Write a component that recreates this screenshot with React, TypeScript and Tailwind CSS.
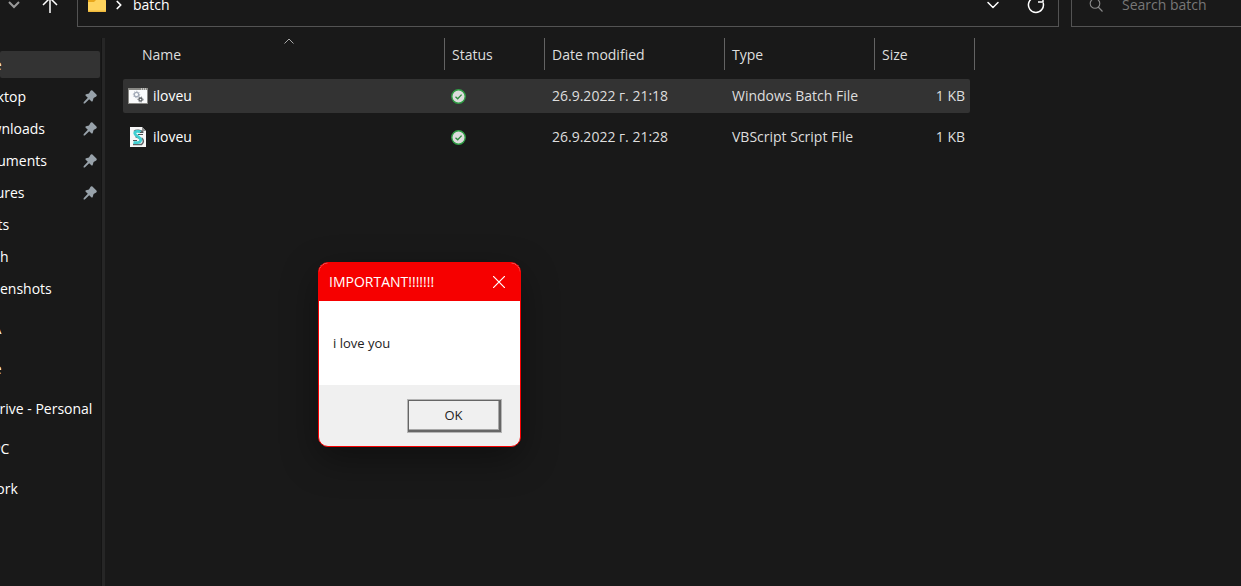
import { ChevronDown, ChevronRight } from 'lucide-react';

type SidebarItem = { label: string; pinned?: boolean };

const quickAccess: SidebarItem[] = [
  { label: 'Desktop', pinned: true },
  { label: 'Downloads', pinned: true },
  { label: 'Documents', pinned: true },
  { label: 'Pictures', pinned: true },
  { label: 'Hosts' },
  { label: 'batch' },
  { label: 'Screenshots' },
];

const locations = ['MEGA', 'Home', 'OneDrive - Personal', 'This PC', 'Network'];

const files = [
  { name: 'iloveu', kind: 'bat', date: '26.9.2022 г. 21:18', type: 'Windows Batch File', size: '1 KB', selected: true },
  { name: 'iloveu', kind: 'vbs', date: '26.9.2022 г. 21:28', type: 'VBScript Script File', size: '1 KB', selected: false },
];

function FolderIcon() {
  return (
    <svg viewBox="0 0 18 14" className="w-[18px] h-3.5 shrink-0" aria-hidden="true">
      <path d="M0 1a1 1 0 0 1 1-1h5l2 2h9a1 1 0 0 1 1 1v4H0z" fill="#e8a71c" />
      <path d="M0 4h6l2-2h9a1 1 0 0 1 1 1v10a1 1 0 0 1-1 1H1a1 1 0 0 1-1-1z" fill="#ffd45e" />
      <path d="M0 12.500h18v.5a1 1 0 0 1-1 1H1a1 1 0 0 1-1-1z" fill="#f0b93c" />
    </svg>
  );
}

function PinIcon() {
  return (
    <svg viewBox="0 0 14 14" className="w-3.5 h-3.5 shrink-0" aria-hidden="true">
      <path
        d="M7.600.8c.4-.7 1.200-.8 1.800-.2l4 4c.6.6.5 1.400-.2 1.800L10.600 8l-.9 2.900c-.2.7-.9.9-1.400.4L6.200 9.200 1.800 13.400H.6v-1.200L4.800 7.800 2.700 5.700c-.5-.5-.3-1.200.4-1.400L6 3.400z"
        fill="#98a2aa"
      />
    </svg>
  );
}

function Gear({ cx, cy, r, color }: { cx: number; cy: number; r: number; color: string }) {
  return (
    <g stroke={color} fill="none">
      <circle cx={cx} cy={cy} r={r} strokeWidth="1.300" />
      <circle cx={cx} cy={cy} r={r + 1} strokeWidth="1" strokeDasharray="1.200 1.200" />
    </g>
  );
}

function BatchFileIcon() {
  return (
    <svg viewBox="0 0 20 16" className="w-5 h-4" aria-hidden="true">
      <path d="M0 0h20v16H0z" fill="#8a8a86" />
      <path d="M1 2h18v13H1z" fill="#fafbfc" />
      <path d="M13 1h1M15 1h1M17 1h1" stroke="#fff" />
      <Gear cx={8.5} cy={6.5} r={2.2} color="#a3abb8" />
      <Gear cx={12.5} cy={11.5} r={1.5} color="#5d6266" />
    </svg>
  );
}

function ScriptFileIcon() {
  return (
    <svg viewBox="0 0 16 20" className="w-4 h-5" aria-hidden="true">
      <path d="M0 0h12l4 4v16H0z" fill="#f7f7f7" />
      <path d="M12 0v4h4z" fill="#8d8d8d" />
      <path d="M4 4.500C6 2.500 11 3 13.500 5.500M5.500 9.500l5 2M3 17.500h8.500c2.500-1.500 2.500-5 0-6.500" fill="none" stroke="#5a6264" strokeWidth="1.500" />
      <path d="M10.500 5C8.500 3.800 4.500 4.200 4.800 6.500c.3 2.500 6.200 3.500 6 6.500-.2 2.800-4 3-7.300 2.500" fill="none" stroke="#3fcfd2" strokeWidth="2.800" />
      <path d="M8 7.500h5M10 5.500h3M3 13.500h4" stroke="#4a5254" strokeWidth="1" />
    </svg>
  );
}

function SyncedIcon() {
  return (
    <svg viewBox="0 0 15 15" className="w-[15px] h-[15px]" role="img" aria-label="Synced">
      <circle cx="7.5" cy="7.5" r="6.700" fill="#dcdcdc" stroke="#2f9e44" strokeWidth="1.400" />
      <path d="M4.500 7.700l2.200 2.100 3.900-4.200" fill="none" stroke="#2c8a3d" strokeWidth="1.300" />
    </svg>
  );
}

function Toolbar() {
  return (
    <header className="flex items-end h-[27px] overflow-hidden">
      <div className="flex items-center h-11 w-[77px] shrink-0 pl-2 gap-[22px]">
        <button aria-label="Recent locations" className="text-[#9a9a9a]">
          <svg viewBox="0 0 12 8" className="w-3 h-2" fill="none" stroke="currentColor" strokeWidth="2">
            <path d="M1 1l5 5 5-5" />
          </svg>
        </button>
        <button aria-label="Up" className="text-white">
          <svg viewBox="0 0 16 18" className="w-4 h-[18px]" fill="none" stroke="currentColor" strokeWidth="1.500">
            <path d="M8 17V2M1 9l7-7 7 7" />
          </svg>
        </button>
      </div>
      <div className="flex flex-1 items-center h-11 border border-[#535353] pl-2.5 pr-[13px]">
        <FolderIcon />
        <ChevronRight className="ml-1.5 mr-[7px] size-3.5 text-white" strokeWidth={3} />
        <span className="flex-1">batch</span>
        <button aria-label="Previous locations" className="mr-6">
          <ChevronDown className="size-5" strokeWidth={1.8} />
        </button>
        <button aria-label="Refresh">
          <svg viewBox="0 0 18 18" className="size-[18px]" fill="none" stroke="currentColor" strokeWidth="1.500">
            <path d="M16.200 7A7.500 7.500 0 1 1 13 2.600M16 1v5h-5" />
          </svg>
        </button>
      </div>
      <label className="flex items-center h-11 w-[170px] shrink-0 ml-3 border border-r-0 border-[#535353] pl-[17px] gap-[19px]">
        <svg viewBox="0 0 14 14" className="size-3.5 shrink-0" fill="none" stroke="#8a8a8a" strokeWidth="1.100">
          <circle cx="6" cy="5.500" r="4.800" />
          <path d="M9.200 9l4.300 4.500" />
        </svg>
        <input
          aria-label="Search batch"
          placeholder="Search batch"
          className="min-w-0 flex-1 bg-transparent outline-none placeholder:text-[#777777]"
        />
      </label>
    </header>
  );
}

function Sidebar() {
  return (
    <nav className="w-[101px] shrink-0 overflow-hidden pt-6 whitespace-nowrap">
      <a href="#home" className="flex items-center h-[27px] mr-px rounded-xs bg-[#333333]">
        <span className="-ml-[38px]">Home</span>
      </a>
      <div className="pt-[3px] pb-1">
        {quickAccess.map((item) => (
          <a key={item.label} href="#folder" className="flex items-center justify-between h-8 pr-1">
            <span className="-ml-7">{item.label}</span>
            {item.pinned && <PinIcon />}
          </a>
        ))}
      </div>
      {locations.map((label) => (
        <a key={label} href="#location" className="flex items-center h-10">
          <span className="-ml-[38px]">{label}</span>
        </a>
      ))}
    </nav>
  );
}

function FileList() {
  const headings = ['Status', 'Date modified', 'Type'];

  return (
    <table className="table-fixed w-[852px] h-fit border-separate border-spacing-x-0 border-spacing-y-[7px] mt-1 text-left text-[#dedede]">
      <colgroup>
        <col className="w-[322px]" />
        <col className="w-[100px]" />
        <col className="w-[180px]" />
        <col className="w-[150px]" />
        <col className="w-[95px]" />
        <col className="w-[5px]" />
      </colgroup>
      <thead>
        <tr>
          <th className="relative h-[34px] p-0 align-top font-normal">
            <div className="flex items-center h-8 pt-0.5 pl-[19px] border-r border-[#636363]">Name</div>
            <svg viewBox="0 0 10 6" className="absolute top-0 left-[161px] w-2.5 h-1.5" fill="none" stroke="#a8a8a8">
              <path d="M.5 5.500L5 1l4.500 4.500" />
            </svg>
          </th>
          {headings.map((heading) => (
            <th key={heading} className="p-0 align-top font-normal">
              <div className="flex items-center h-8 pt-0.5 pl-[7px] border-r border-[#636363]">{heading}</div>
            </th>
          ))}
          <th colSpan={2} className="p-0 align-top font-normal">
            <div className="flex items-center h-8 pt-0.5 pl-[7px] border-r border-[#636363]">Size</div>
          </th>
        </tr>
      </thead>
      <tbody>
        {files.map((file) => {
          const bg = file.selected ? 'bg-[#333333]' : '';
          return (
            <tr key={file.kind}>
              <td className={`h-[34px] p-0 rounded-l-xs text-white ${bg}`}>
                <div className="flex items-center gap-1 pl-1">
                  <span className="flex justify-center w-[22px]">
                    {file.kind === 'bat' ? <BatchFileIcon /> : <ScriptFileIcon />}
                  </span>
                  {file.name}
                </div>
              </td>
              <td className={`p-0 pl-1.5 ${bg}`}><SyncedIcon /></td>
              <td className={`p-0 pl-[7px] ${bg}`}>{file.date}</td>
              <td className={`p-0 pl-[7px] ${bg}`}>{file.type}</td>
              <td className={`p-0 pr-[5px] text-right rounded-r-xs ${bg}`}>{file.size}</td>
              <td className="p-0" />
            </tr>
          );
        })}
      </tbody>
    </table>
  );
}

function MessageBox() {
  return (
    <div
      role="dialog"
      aria-labelledby="message-title"
      className="absolute left-[318px] top-[262px] w-[203px] overflow-hidden rounded-[10px] border border-[#f60000] bg-[#f0f0f0] shadow-[0_12px_36px_rgba(0,0,0,0.4)]"
    >
      <div className="flex items-center justify-between h-[38px] pl-2.5 pr-[15px] bg-[#f60000] text-white">
        <h1 id="message-title">IMPORTANT!!!!!!!</h1>
        <button aria-label="Close">
          <svg viewBox="0 0 12 12" className="size-3" fill="none" stroke="currentColor" strokeWidth="1.200">
            <path d="M0 0l12 12M12 0L0 12" />
          </svg>
        </button>
      </div>
      <p className="flex items-center h-[84px] px-3.5 bg-white text-[13px] text-[#222222]">i love you</p>
      <div className="flex justify-end h-[61px] pt-3.5 pr-[18px]">
        <button className="w-[95px] h-[34px] border border-[#b5b5b5] text-[13px] text-[#222222]">
          <span className="flex items-center justify-center h-full border-t border-l border-r-2 border-b-2 border-[#666666]">
            <span className="flex items-center justify-center size-full border-r border-b border-[#a8a8a8]">OK</span>
          </span>
        </button>
      </div>
    </div>
  );
}

export default function App() {
  return (
    <div className="relative flex flex-col min-h-screen overflow-hidden bg-[#191919] font-['Open_Sans',sans-serif] text-sm text-white">
      <Toolbar />
      <main className="flex flex-1">
        <Sidebar />
        <div className="w-1 mt-[11px] mr-[18px] shrink-0 border-l border-[#141414] bg-[#262626]" />
        <FileList />
      </main>
      <MessageBox />
    </div>
  );
}
